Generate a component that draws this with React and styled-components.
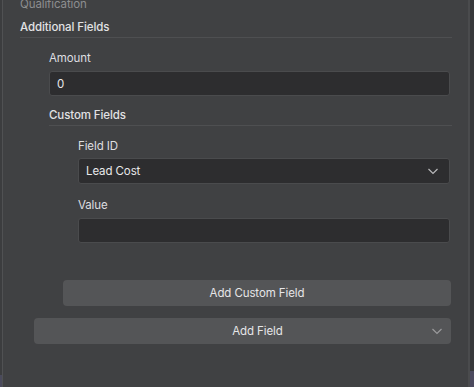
import styled, { createGlobalStyle } from "styled-components";

const GlobalStyle = createGlobalStyle`
  html, body {
    margin: 0;
    padding: 0;
    background: #404143;
    font-family: Inter, "Noto Sans", sans-serif;
  }
  * { box-sizing: border-box; }
`;

const Page = styled.div`
  display: flex;
  height: 387px;
  overflow: hidden;
  background: #404143;
  font-size: 11.5px;
  letter-spacing: -0.1px;
`;

const Rail = styled.div`
  width: 3px;
  flex: none;
  background: #3c3d3f;
  border-right: 1px solid #505153;
  position: relative;
  &::after {
    content: "";
    position: absolute;
    left: 0;
    right: 0;
    bottom: 0;
    height: 12px;
    background: #4a4a5c;
  }
`;

const Content = styled.div`
  flex: 1;
  padding: 0 16px 0 17px;
  margin-top: -4px;
  display: flex;
  flex-direction: column;
`;

const Scrollbar = styled.div`
  width: 6px;
  flex: none;
  border-left: 2px solid #4a4b4d;
  background: #37383a;
  position: relative;
  &::after {
    content: "";
    position: absolute;
    left: 0;
    right: 0;
    bottom: 0;
    height: 16px;
    background: #4c4a5e;
  }
`;

const Muted = styled.div`
  line-height: 16px;
  color: #8d8e90;
`;

const Heading = styled.div`
  margin-top: ${(p) => p.$top || 0}px;
  font-weight: 500;
  line-height: 17px;
  color: #e2e2e4;
  padding-bottom: 1px;
  border-bottom: 1px solid #4e4f51;
`;

const Group = styled.div`
  display: flex;
  flex-direction: column;
  padding-left: ${(p) => p.$indent}px;
`;

const Label = styled.div`
  margin-top: ${(p) => p.$top}px;
  margin-bottom: ${(p) => p.$bottom || 5}px;
  line-height: 16px;
  color: #dedee0;
`;

const Input = styled.div`
  height: ${(p) => p.$h || 25}px;
  margin-right: 2px;
  background: #2d2d2f;
  border: 1px solid #4a4b4d;
  border-radius: 3px;
  display: flex;
  align-items: center;
  justify-content: space-between;
  padding: 0 10px 0 7px;
  color: #e8e8ea;
`;

const Button = styled.div`
  margin-top: ${(p) => p.$top}px;
  margin-left: ${(p) => p.$left}px;
  margin-right: 1px;
  padding-left: ${(p) => p.$shift || 0}px;
  height: 26px;
  border-radius: 4px;
  background: #545557;
  display: flex;
  align-items: center;
  justify-content: center;
  position: relative;
  color: #e6e6e8;
`;

const ButtonChevron = styled.span`
  position: absolute;
  right: 8px;
  top: 7px;
  display: flex;
`;

const Chevron = ({ color = "#b8b8ba" }) => (
  <svg width="12" height="12" viewBox="0 0 12 12" fill="none">
    <path d="M1.5 4l4.5 4.5L10.5 4" stroke={color} strokeWidth="1.2" />
  </svg>
);

export default function App() {
  return (
    <>
      <GlobalStyle />
      <Page>
        <Rail />
        <Content>
          <Muted>Qualification</Muted>
          <Heading $top={7}>Additional Fields</Heading>
          <Group $indent={29}>
            <Label $top={12}>Amount</Label>
            <Input>0</Input>
            <Heading $top={11}>Custom Fields</Heading>
            <Group $indent={29}>
              <Label $top={12} $bottom={4}>Field ID</Label>
              <Input $h={26}>
                Lead Cost
                <Chevron />
              </Input>
              <Label $top={13}>Value</Label>
              <Input />
            </Group>
            <Button $top={37} $left={14}>Add Custom Field</Button>
          </Group>
          <Button $top={12} $left={14} $shift={30}>
            Add Field
            <ButtonChevron>
              <Chevron color="#9a9a9c" />
            </ButtonChevron>
          </Button>
        </Content>
        <Scrollbar />
      </Page>
    </>
  );
}
